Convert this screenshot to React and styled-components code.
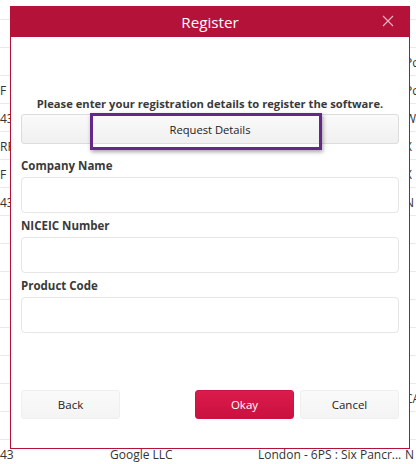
import styled, { createGlobalStyle } from "styled-components";

const GlobalStyle = createGlobalStyle`
  html, body {
    margin: 0;
    padding: 0;
    background: #fff;
  }
  body {
    font-family: "Open Sans", "Noto Sans", sans-serif;
    color: #333;
  }
`;

const rows = [
  ["", "", "", ""],
  ["", "", "", ""],
  ["", "", "", "Pc"],
  ["F", "", "", "Pc"],
  ["43", "", "", "W"],
  ["RF", "", "", "X"],
  ["F", "", "", "X"],
  ["43", "", "", "N"],
  ["", "", "", ""],
  ["", "", "", ""],
  ["", "", "", ""],
  ["", "", "", ""],
  ["", "", "", ""],
  ["", "", "", ""],
  ["", "", "", "CA"],
  ["", "", "", ""],
  ["43", "Google LLC", "London - 6PS : Six Pancr...", "N"],
];

const fields = ["Company Name", "NICEIC Number", "Product Code"];

const CloseIcon = () => (
  <svg width="12" height="12" viewBox="0 0 12 12">
    <path d="M1 1 L11 11 M11 1 L1 11" stroke="#f3b8c6" strokeWidth="1.1" fill="none" />
  </svg>
);

const App = () => {
  return (
    <Page>
      <GlobalStyle />
      <Table>
        {rows.map((r, i) => (
          <Row key={i}>
            {r.map((c, j) => (
              <Cell key={j}>{c}</Cell>
            ))}
          </Row>
        ))}
      </Table>

      <Dialog>
        <Header>
          <Title>Register</Title>
          <Close>
            <CloseIcon />
          </Close>
        </Header>
        <Body>
          <Intro>Please enter your registration details to register the software.</Intro>
          <RequestWrap>
            <RequestBtn>Request Details</RequestBtn>
            <Highlight />
          </RequestWrap>
          {fields.map((f, i) => (
            <Field key={f} $first={i === 0}>
              <Label>{f}</Label>
              <Input />
            </Field>
          ))}
          <Footer>
            <Button>Back</Button>
            <Right>
              <Button $primary>Okay</Button>
              <Button>Cancel</Button>
            </Right>
          </Footer>
        </Body>
      </Dialog>
    </Page>
  );
};
export default App;

const Page = styled.div`
  position: relative;
  width: 416px;
  height: 464px;
  overflow: hidden;
  background: #fff;
`;

const Table = styled.div`
  margin-top: -8px;
  display: flex;
  flex-direction: column;
`;

const Row = styled.div`
  display: grid;
  grid-template-columns: 110px 148px 147px 1fr;
  height: 28px;
  box-sizing: border-box;
  border-bottom: 1px solid #e9e9e9;
  align-items: center;
  font-size: 12px;
  color: #333;
`;

const Cell = styled.div`
  white-space: nowrap;
  overflow: hidden;
  padding-top: 1px;
`;

const Dialog = styled.div`
  position: absolute;
  left: 10px;
  top: 6px;
  width: 400px;
  height: 443px;
  box-sizing: border-box;
  border: 1px solid #b5123a;
  border-top: none;
  background: #fff;
  display: flex;
  flex-direction: column;
`;

const Header = styled.div`
  height: 31px;
  margin: 0 -1px;
  background: #b5123a;
  display: flex;
  align-items: center;
  justify-content: center;
  position: relative;
`;

const Title = styled.div`
  color: #fff;
  font-size: 15.2px;
  padding-top: 1px;
`;

const Close = styled.div`
  position: absolute;
  right: 16px;
  top: 9px;
  display: flex;
`;

const Body = styled.div`
  flex: 1;
  display: flex;
  flex-direction: column;
  padding: 59px 10px 29px;
`;

const Intro = styled.div`
  font-size: 11.2px;
  line-height: 16px;
  font-weight: 700;
  color: #3a3a3a;
  text-align: center;
  white-space: nowrap;
  margin-bottom: 2px;
`;

const RequestWrap = styled.div`
  position: relative;
`;

const RequestBtn = styled.button`
  width: 100%;
  height: 30px;
  border: 1px solid #dcdcdc;
  border-radius: 3px;
  background: linear-gradient(#fafafa, #f0f0f0);
  font-family: inherit;
  font-size: 11.2px;
  color: #222;
  padding: 0;
`;

const Highlight = styled.div`
  position: absolute;
  left: 69px;
  top: -1px;
  width: 232px;
  height: 37px;
  box-sizing: border-box;
  border: 3px solid #65288a;
  box-shadow: 1px 2px 4px rgba(0, 0, 0, 0.35);
  pointer-events: none;
`;

const Field = styled.div`
  display: flex;
  flex-direction: column;
  margin-top: ${(p) => (p.$first ? "14px" : "5px")};
`;

const Label = styled.div`
  font-size: 11.5px;
  line-height: 16px;
  font-weight: 700;
  color: #3a3a3a;
  margin-bottom: 3px;
`;

const Input = styled.div`
  height: 36px;
  box-sizing: border-box;
  border: 1px solid #e6e6e6;
  border-radius: 4px;
  background: #fff;
`;

const Footer = styled.div`
  margin-top: auto;
  display: flex;
  justify-content: space-between;
`;

const Right = styled.div`
  display: flex;
  gap: 6px;
`;

const Button = styled.button`
  width: 99px;
  height: 29px;
  padding: 0;
  border-radius: 3px;
  font-family: inherit;
  font-size: 11.5px;
  border: 1px solid ${(p) => (p.$primary ? "#cc1443" : "#efefef")};
  color: ${(p) => (p.$primary ? "#fff" : "#222")};
  background: ${(p) =>
    p.$primary
      ? "linear-gradient(#db1b4b, #c9113f)"
      : "linear-gradient(#fafafa, #f4f4f4)"};
`;
